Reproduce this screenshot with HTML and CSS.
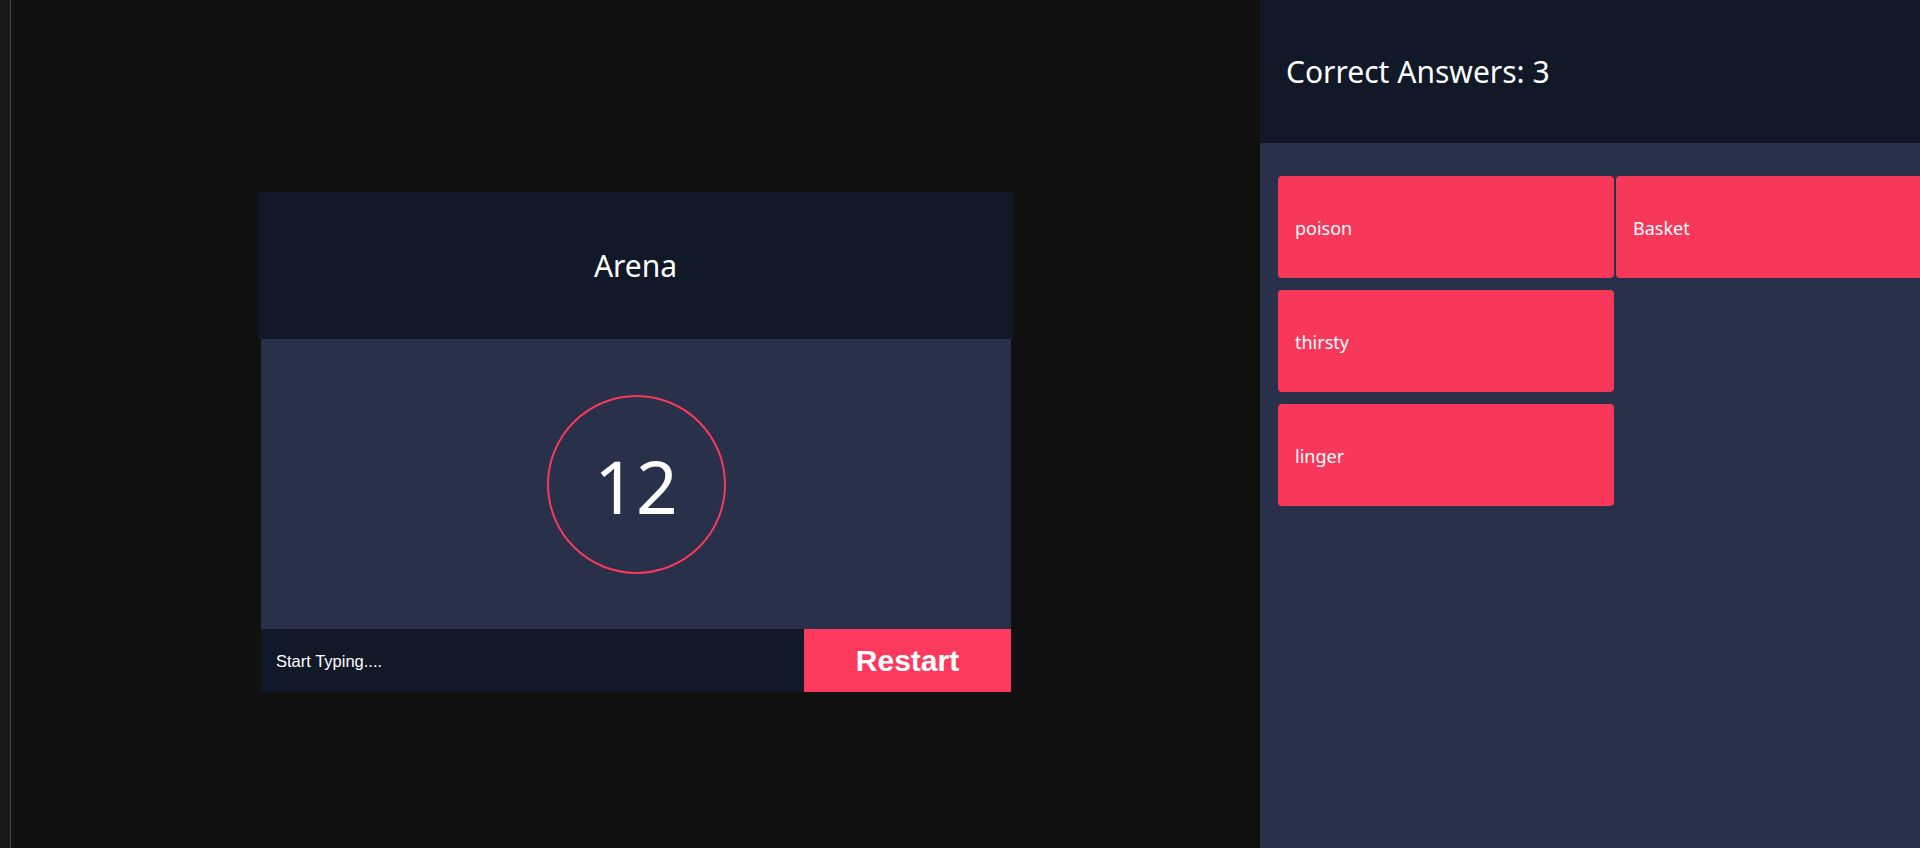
FILE: index.html
```html
<!DOCTYPE html>
<html lang="en">
<head>
<meta charset="utf-8">
<title>Typing Arena</title>
<link rel="stylesheet" href="styles.css">
</head>
<body>
<div class="app">
  <div class="edge"></div>
  <main class="stage">
    <section class="arena">
      <header class="arena-head">Arena</header>
      <div class="arena-body">
        <div class="timer">12</div>
      </div>
      <div class="arena-foot">
        <input class="typing" type="text" placeholder="Start Typing....">
        <button class="restart" type="button">Restart</button>
      </div>
    </section>
  </main>
  <aside class="panel">
    <header class="panel-head">Correct Answers: 3</header>
    <div class="answers">
      <div class="col">
        <div class="word">poison</div>
        <div class="word">thirsty</div>
        <div class="word">linger</div>
      </div>
      <div class="col">
        <div class="word">Basket</div>
      </div>
    </div>
  </aside>
</div>
</body>
</html>
```

FILE: styles.css
```css
* { box-sizing: border-box; }
html, body {
  margin: 0;
  height: 100%;
  overflow: hidden;
  background: #111111;
  font-family: "Noto Sans", "Open Sans", sans-serif;
  color: #ffffff;
}
.app {
  display: flex;
  height: 100vh;
  width: 1920px;
}
.edge {
  width: 11px;
  flex-shrink: 0;
  background: #19191c;
  border-right: 1px solid #4a4a4d;
}
.stage {
  flex: 1;
  display: flex;
  justify-content: center;
  align-items: flex-start;
  padding-top: 192px;
  background: #111111;
}
.arena {
  width: 755px;
  display: flex;
  flex-direction: column;
}
.arena-head {
  height: 147px;
  background: #111827;
  display: flex;
  align-items: center;
  justify-content: center;
  font-size: 30px;
}
.arena-body {
  margin: 0 2px 0 3px;
  height: 290px;
  background: #29304a;
  display: flex;
  align-items: center;
  justify-content: center;
}
.timer {
  width: 179px;
  height: 179px;
  border: 2px solid #f7385b;
  border-radius: 50%;
  display: flex;
  align-items: center;
  justify-content: center;
  font-size: 73px;
  line-height: 1;
  padding-top: 2px;
}
.arena-foot {
  margin: 0 2px 0 3px;
  height: 63px;
  display: flex;
}
.typing {
  flex: 1;
  min-width: 0;
  background: #111827;
  border: none;
  outline: none;
  color: #ffffff;
  font-family: "Liberation Sans", Arial, sans-serif;
  font-size: 16.5px;
  padding: 2px 15px 0;
}
.typing::placeholder { color: #ffffff; opacity: 1; }
.restart {
  width: 207px;
  background: #fb3a5d;
  border: none;
  color: #ffffff;
  font-family: "Liberation Sans", Arial, sans-serif;
  font-weight: 700;
  font-size: 30px;
  padding: 0;
}
.panel {
  width: 660px;
  flex-shrink: 0;
  background: #29304a;
  display: flex;
  flex-direction: column;
  overflow: hidden;
}
.panel-head {
  height: 143px;
  flex-shrink: 0;
  background: #111827;
  display: flex;
  align-items: center;
  padding-left: 26px;
  font-size: 30px;
}
.answers {
  display: flex;
  gap: 2px;
  padding: 33px 0 0 18px;
}
.col {
  width: 336px;
  flex-shrink: 0;
  display: flex;
  flex-direction: column;
  gap: 12px;
}
.word {
  height: 102px;
  background: #f7385b;
  border-radius: 4px;
  display: flex;
  align-items: center;
  padding: 2px 0 0 17px;
  font-size: 18px;
}
```
